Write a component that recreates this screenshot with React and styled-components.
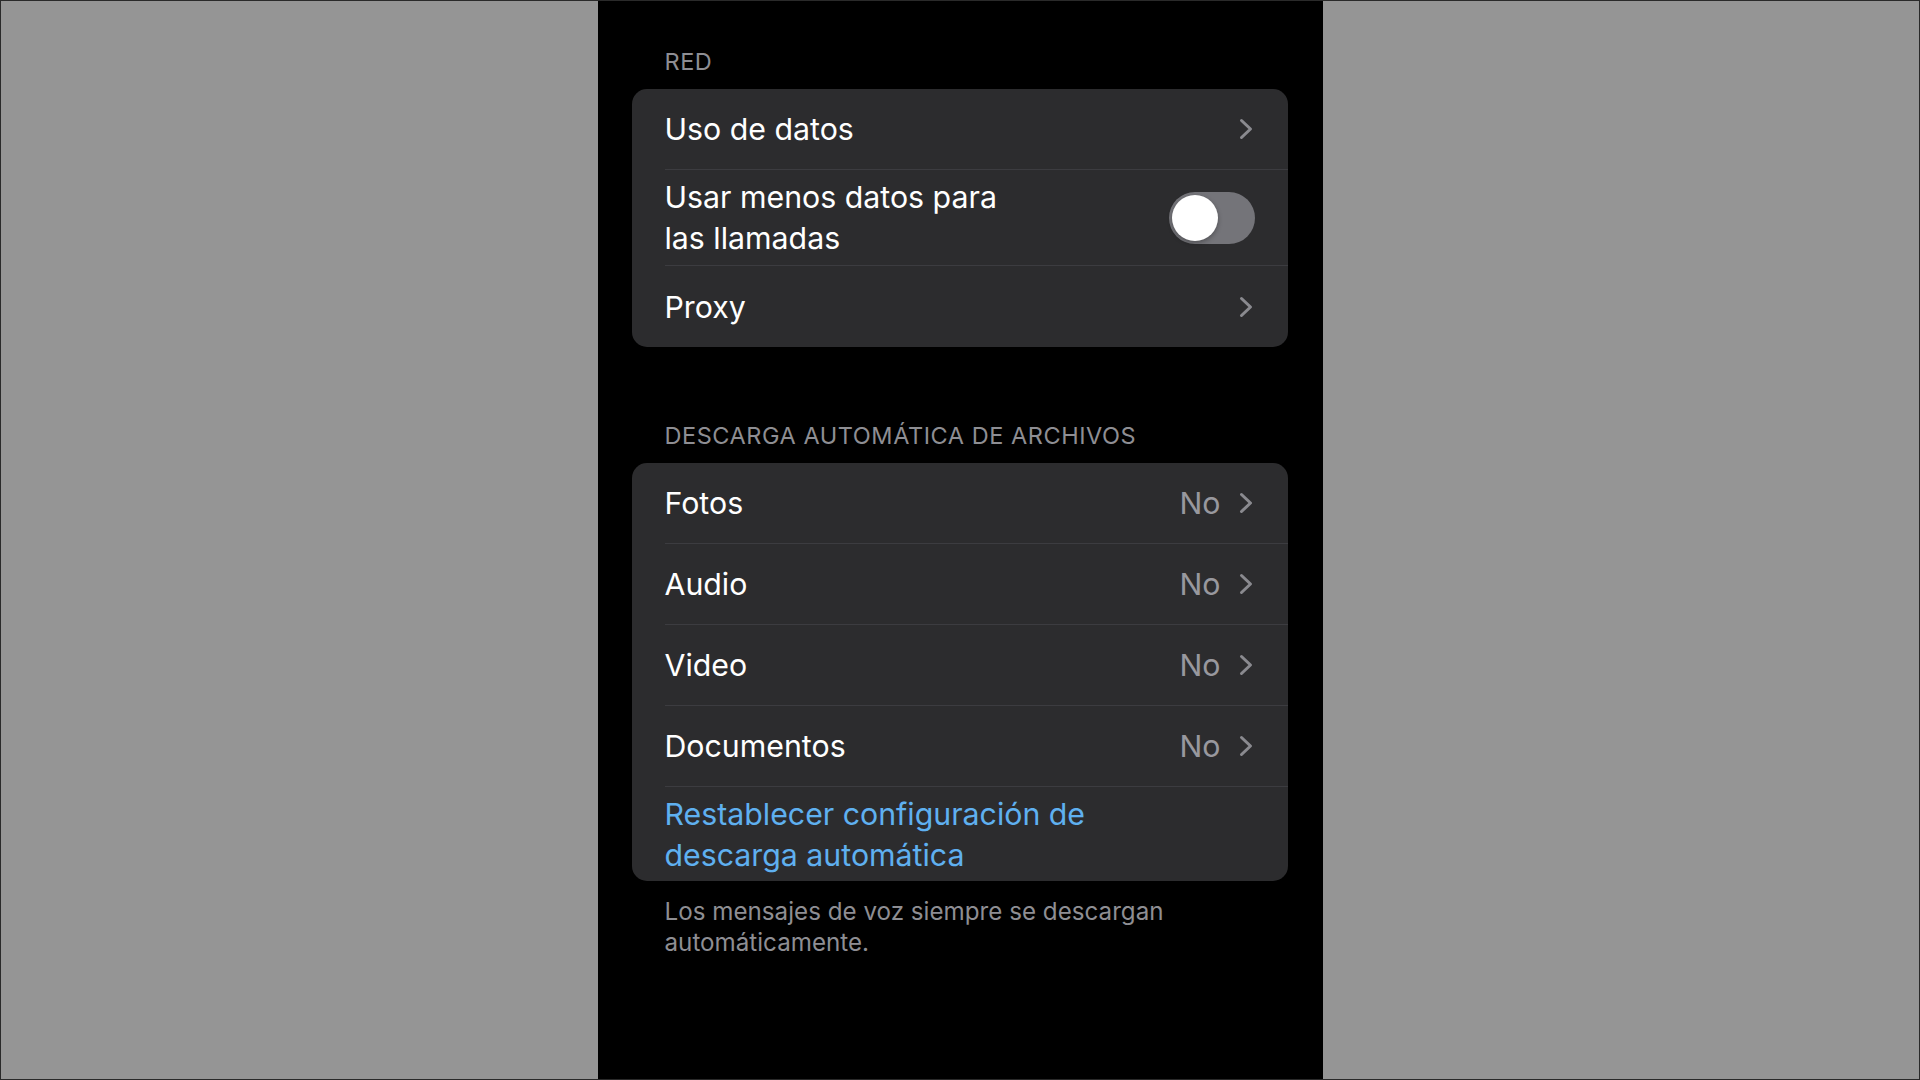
import React from 'react';
import styled, { createGlobalStyle } from 'styled-components';

const GlobalStyle = createGlobalStyle`
  html, body {
    margin: 0;
    padding: 0;
    background: #959595;
  }
  * {
    box-sizing: border-box;
  }
`;

const Page = styled.div`
  width: 1920px;
  height: 1080px;
  background: #959595;
  border: 1px solid #2a2a2a;
  display: flex;
  justify-content: center;
  font-family: Inter, "Noto Sans", sans-serif;
  overflow: hidden;
`;

const Screen = styled.div`
  width: 725px;
  height: 100%;
  background: #000;
  padding: 46px 35px 0 34px;
  display: flex;
  flex-direction: column;
`;

const SectionHeader = styled.div`
  height: 28px;
  line-height: 28px;
  padding-left: 33px;
  font-size: 23.5px;
  letter-spacing: 0.55px;
  color: #8e8e93;
  text-transform: uppercase;
  margin-top: ${(p) => p.$top || 0}px;
  margin-bottom: 14px;
  transform: translateY(1px);
`;

const Card = styled.div`
  background: #2c2c2e;
  border-radius: 15px;
  overflow: hidden;
  display: flex;
  flex-direction: column;
`;

const Row = styled.div`
  display: flex;
  padding-left: 33px;
  min-height: ${(p) => p.$h || 81}px;

  &:last-child > div {
    border-bottom: none;
  }
`;

const RowBody = styled.div`
  flex: 1;
  display: flex;
  align-items: center;
  justify-content: space-between;
  border-bottom: 1px solid #3c3c40;
  padding-right: ${(p) => p.$pr || 35}px;
`;

const Label = styled.div`
  font-size: 30.3px;
  line-height: 41px;
  padding-top: 1px;
  color: ${(p) => (p.$link ? '#5fb0f0' : '#ffffff')};
  max-width: ${(p) => p.$max || 600}px;
`;

const Accessory = styled.div`
  display: flex;
  align-items: center;
  gap: 18px;
`;

const Value = styled.span`
  font-size: 30.3px;
  color: #98989e;
`;

const Track = styled.div`
  width: 86px;
  height: 52px;
  border-radius: 26px;
  background: #747479;
  padding: 3px;
  display: flex;
`;

const Knob = styled.div`
  width: 46px;
  height: 46px;
  border-radius: 50%;
  background: #fff;
  box-shadow: 0 2px 5px rgba(0, 0, 0, 0.3);
`;

const Footer = styled.div`
  margin-top: 15px;
  padding: 0 40px 0 33px;
  font-size: 24.2px;
  line-height: 31px;
  color: #8e8e93;
`;

const Chevron = () => (
  <svg width="14" height="22" viewBox="0 0 14 22">
    <path
      d="M2.5 2.5 L11.5 11 L2.5 19.5"
      fill="none"
      stroke="#8a8a8f"
      strokeWidth="3"
      strokeLinecap="round"
      strokeLinejoin="round"
    />
  </svg>
);

const Toggle = () => (
  <Track>
    <Knob />
  </Track>
);

const NavRow = ({ label, value }) => (
  <Row>
    <RowBody>
      <Label>{label}</Label>
      <Accessory>
        {value && <Value>{value}</Value>}
        <Chevron />
      </Accessory>
    </RowBody>
  </Row>
);

const downloads = ['Fotos', 'Audio', 'Video', 'Documentos'];

const App = () => {
  return (
    <>
      <GlobalStyle />
      <Page>
        <Screen>
          <SectionHeader>Red</SectionHeader>
          <Card>
            <NavRow label="Uso de datos" />
            <Row $h={96}>
              <RowBody $pr={33}>
                <Label $max={370}>Usar menos datos para las llamadas</Label>
                <Toggle />
              </RowBody>
            </Row>
            <NavRow label="Proxy" />
          </Card>

          <SectionHeader $top={74}>Descarga automática de archivos</SectionHeader>
          <Card>
            {downloads.map((d) => (
              <NavRow key={d} label={d} value="No" />
            ))}
            <Row $h={94}>
              <RowBody>
                <Label $link $max={460}>
                  Restablecer configuración de descarga automática
                </Label>
              </RowBody>
            </Row>
          </Card>
          <Footer>Los mensajes de voz siempre se descargan automáticamente.</Footer>
        </Screen>
      </Page>
    </>
  );
};

export default App;
